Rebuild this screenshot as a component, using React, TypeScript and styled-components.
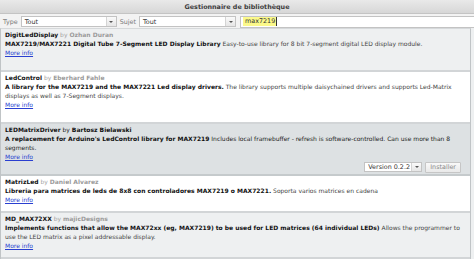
import React from "react";
import styled, { createGlobalStyle } from "styled-components";

const Global = createGlobalStyle`
  html, body { margin: 0; padding: 0; background: #e9ebec; }
  body { font-family: "DejaVu Sans", "Liberation Sans", sans-serif; }
`;

const Window = styled.div`
  width: 474px;
  height: 259px;
  overflow: hidden;
  display: flex;
  flex-direction: column;
  background: #eef0f1;
  font-size: 6px;
`;

const TitleBar = styled.div`
  height: 13px;
  flex: none;
  display: flex;
  align-items: center;
  justify-content: center;
  background: linear-gradient(#e9e9e9, #d7d7d7);
  border-bottom: 1px solid #c4c4c4;
  font-weight: bold;
  font-size: 6.4px;
  color: #3c3c3c;
`;

const FilterBar = styled.div`
  height: 14px;
  flex: none;
  display: flex;
  align-items: center;
  gap: 3px;
  padding: 1px 0 0 3px;
  background: #f3f3f3;
  box-sizing: border-box;
`;

const Label = styled.span`
  color: #7a7a7a;
  font-size: 6.4px;
`;

const Select = styled.div<{ $w: number }>`
  width: ${(p) => p.$w}px;
  height: 11px;
  box-sizing: border-box;
  display: flex;
  align-items: stretch;
  background: #fff;
  border: 1px solid #c3c3c3;
  font-size: 6.4px;
  color: #333;
`;

const SelectText = styled.span`
  flex: 1;
  display: flex;
  align-items: center;
  padding-left: 3px;
`;

const Arrow = styled.span`
  width: 9px;
  display: flex;
  align-items: center;
  justify-content: center;
  border-left: 1px solid #d4d4d4;
  background: linear-gradient(#fafafa, #e6e6e6);
  &::after {
    content: "";
    border-left: 2px solid transparent;
    border-right: 2px solid transparent;
    border-top: 2px solid #555;
  }
`;

const Search = styled.div`
  flex: 1;
  height: 12px;
  box-sizing: border-box;
  display: flex;
  align-items: center;
  margin-left: 1px;
  padding-left: 2px;
  background: #fff;
  border: 1px solid #c3c3c3;
  border-right: none;
  font-size: 6.4px;
`;

const Highlight = styled.span`
  background: #fbf98a;
  color: #333;
  padding: 0 1px 0 2px;
  border-right: 1px solid #333;
  line-height: 9px;
`;

const List = styled.div`
  flex: 1;
  width: 471px;
  box-sizing: border-box;
  background: #ffffff;
  border-left: 1px solid #c0c4c6;
  border-right: 1px solid #c0c4c6;
  border-top: 1px solid #d6d9db;
  display: flex;
  flex-direction: column;
`;

const Entry = styled.div<{ $bg: string; $selected?: boolean }>`
  flex: none;
  background: ${(p) => p.$bg};
  border-bottom: 2px solid ${(p) => (p.$selected ? "#c5cacc" : "#d2d5d7")};
  padding: 1px 5px 1px 4px;
  line-height: 9px;
  color: ${(p) => (p.$selected ? "#222" : "#444")};
`;

const Line = styled.div`
  white-space: nowrap;
`;

const Name = styled.b`
  color: #111;
`;

const By = styled.span<{ $selected?: boolean }>`
  color: ${(p) => (p.$selected ? "#222" : "#a3a3a3")};
  b {
    color: ${(p) => (p.$selected ? "#111" : "#9a9a9a")};
  }
`;

const Lead = styled.b`
  color: #111;
`;

const MoreInfo = styled.a`
  color: #2a3fd0;
  text-decoration: underline;
  cursor: pointer;
`;

const ButtonRow = styled.div<{ $h: number }>`
  height: ${(p) => p.$h}px;
  display: flex;
  justify-content: flex-end;
  align-items: center;
  gap: 3px;
  padding-right: 4px;
`;

const VersionBox = styled(Select)`
  height: 10px;
  font-size: 6.4px;
`;

const InstallButton = styled.button`
  height: 11px;
  padding: 0 4px;
  font-family: inherit;
  font-size: 6.4px;
  color: #8a8a8a;
  background: linear-gradient(#f9f9f9, #e9e9e9);
  border: 1px solid #c6c6c6;
  border-radius: 1px;
  line-height: 1;
`;

type Lib = {
  name: string;
  author: string;
  lead: string;
  lines: string[];
  bg: string;
  row: number;
  selected?: boolean;
};

const libs: Lib[] = [
  {
    name: "DigitLedDisplay",
    author: "Ozhan Duran",
    lead: "MAX7219/MAX7221 Digital Tube 7-Segment LED Display Library",
    lines: [" Easy-to-use library for 8 bit 7-segment digital LED display module."],
    bg: "#eef0f1",
    row: 12,
  },
  {
    name: "LedControl",
    author: "Eberhard Fahle",
    lead: "A library for the MAX7219 and the MAX7221 Led display drivers.",
    lines: [
      " The library supports multiple daisychained drivers and supports Led-Matrix",
      "displays as well as 7-Segment displays.",
    ],
    bg: "#ffffff",
    row: 12,
  },
  {
    name: "LEDMatrixDriver",
    author: "Bartosz Bielawski",
    lead: "A replacement for Arduino's LedControl library for MAX7219",
    lines: [
      " Includes local framebuffer - refresh is software-controlled. Can use more than 8",
      "segments.",
    ],
    bg: "#dde1e3",
    row: 12,
    selected: true,
  },
  {
    name: "MatrizLed",
    author: "Daniel Alvarez",
    lead: "Libreria para matrices de leds de 8x8 con controladores MAX7219 o MAX7221.",
    lines: [" Soporta varios matrices en cadena"],
    bg: "#ffffff",
    row: 6,
  },
  {
    name: "MD_MAX72XX",
    author: "majicDesigns",
    lead: "Implements functions that allow the MAX72xx (eg, MAX7219) to be used for LED matrices (64 individual LEDs)",
    lines: [" Allows the programmer to", "use the LED matrix as a pixel addressable display."],
    bg: "#eef0f1",
    row: 6,
  },
];

function LibraryEntry({ lib }: { lib: Lib }) {
  const [first, ...rest] = lib.lines;
  return (
    <Entry $bg={lib.bg} $selected={lib.selected}>
      <Line>
        <Name>{lib.name}</Name>{" "}
        <By $selected={lib.selected}>
          by <b>{lib.author}</b>
        </By>
      </Line>
      <Line>
        <Lead>{lib.lead}</Lead>
        {first}
      </Line>
      {rest.map((l) => (
        <Line key={l}>{l}</Line>
      ))}
      <Line>
        <MoreInfo>More info</MoreInfo>
      </Line>
      <ButtonRow $h={lib.row}>
        {lib.selected && (
          <>
            <VersionBox $w={58}>
              <SelectText>Version 0.2.2</SelectText>
              <Arrow />
            </VersionBox>
            <InstallButton>Installer</InstallButton>
          </>
        )}
      </ButtonRow>
    </Entry>
  );
}

export default function App() {
  return (
    <>
      <Global />
      <Window>
        <TitleBar>Gestionnaire de bibliothèque</TitleBar>
        <FilterBar>
          <Label>Type</Label>
          <Select $w={96}>
            <SelectText>Tout</SelectText>
            <Arrow />
          </Select>
          <Label>Sujet</Label>
          <Select $w={97}>
            <SelectText>Tout</SelectText>
            <Arrow />
          </Select>
          <Search>
            <Highlight>max7219</Highlight>
          </Search>
        </FilterBar>
        <List>
          {libs.map((l) => (
            <LibraryEntry key={l.name} lib={l} />
          ))}
        </List>
      </Window>
    </>
  );
}
